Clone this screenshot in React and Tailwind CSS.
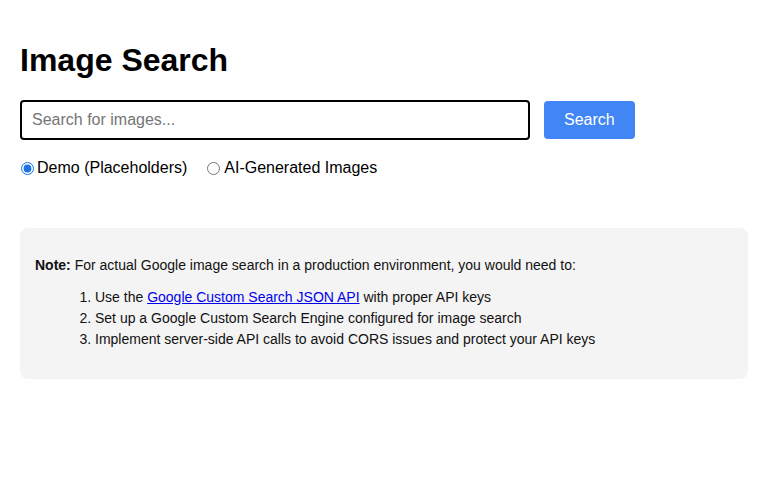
import { useState } from 'react';

export default function App() {
  const [mode, setMode] = useState('demo');

  return (
    <div className="min-h-screen bg-white p-5 text-black font-['Liberation_Sans',Arial,sans-serif]">
      <h1 className="mt-[22px] mb-[21px] text-[32px] font-bold leading-[37px]">Image Search</h1>

      <div className="flex items-center">
        <input
          type="text"
          placeholder="Search for images..."
          className="w-[510px] h-10 rounded-[4px] border-2 border-black px-[10px] text-base placeholder:text-[#757575] outline-none"
        />
        <button className="ml-[14px] h-[38px] rounded-[4px] bg-[#4285f4] px-5 text-base text-white">
          Search
        </button>
      </div>

      <div className="mt-[19px] flex items-center text-base leading-[18px]">
        <label className="flex items-center mr-5">
          <input
            type="radio"
            name="mode"
            checked={mode === 'demo'}
            onChange={() => setMode('demo')}
            className="m-0 ml-px mr-[3px] h-[13px] w-[13px] accent-[#1a73e8]"
          />
          Demo (Placeholders)
        </label>
        <label className="flex items-center">
          <input
            type="radio"
            name="mode"
            checked={mode === 'ai'}
            onChange={() => setMode('ai')}
            className="m-0 mr-1 h-[13px] w-[13px]"
          />
          AI-Generated Images
        </label>
      </div>

      <div className="mt-[51px] rounded-lg bg-[#f4f4f4] px-[15px] py-[15px] text-sm text-[#111]">
        <p className="my-[14px] leading-4">
          <strong className="font-bold">Note:</strong> For actual Google image search in a production environment, you would need to:
        </p>
        <ol className="my-[14px] list-decimal pl-[60px] leading-[21px]">
          <li>
            Use the{' '}
            <a href="#" className="text-[#0000ee] underline">
              Google Custom Search JSON API
            </a>{' '}
            with proper API keys
          </li>
          <li>Set up a Google Custom Search Engine configured for image search</li>
          <li>Implement server-side API calls to avoid CORS issues and protect your API keys</li>
        </ol>
      </div>
    </div>
  );
}
